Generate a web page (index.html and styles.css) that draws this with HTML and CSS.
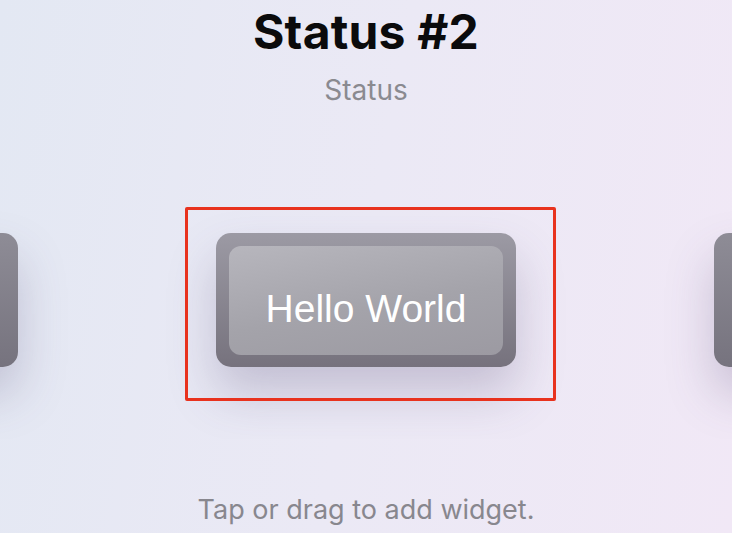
FILE: index.html
```html
<!DOCTYPE html>
<html lang="en">
<head>
<meta charset="utf-8">
<title>Status #2</title>
<link rel="stylesheet" href="styles.css">
</head>
<body>
<main class="screen">
  <header class="header">
    <h1 class="title">Status #2</h1>
    <p class="subtitle">Status</p>
  </header>
  <section class="carousel">
    <div class="widget side"></div>
    <div class="widget-slot">
      <div class="widget main">
        <div class="widget-inner">Hello World</div>
      </div>
      <div class="highlight"></div>
    </div>
    <div class="widget side"></div>
  </section>
  <p class="hint">Tap or drag to add widget.</p>
</main>
</body>
</html>
```
FILE: styles.css
```css
html, body {
  margin: 0;
  padding: 0;
}
body {
  width: 732px;
  height: 533px;
  overflow: hidden;
  background: linear-gradient(100deg, #e3e8f3 0%, #ebe9f5 50%, #f1e8f6 100%);
  font-family: Inter, "Liberation Sans", sans-serif;
}
.screen {
  display: flex;
  flex-direction: column;
  align-items: center;
  height: 533px;
}
.header {
  padding-top: 4px;
  display: flex;
  flex-direction: column;
  align-items: center;
}
.title {
  margin: 0;
  font-size: 48px;
  line-height: 56px;
  font-weight: 700;
  color: #0b0b0c;
  letter-spacing: 0.2px;
}
.subtitle {
  margin: 14px 0 0;
  font-size: 28px;
  line-height: 32px;
  color: #8a8a90;
}
.carousel {
  margin-top: 95px;
  padding: 32px 0 72px;
  display: flex;
  justify-content: center;
  gap: 198px;
  width: 732px;
  overflow: hidden;
}
.widget {
  flex: none;
  width: 300px;
  height: 134px;
  box-sizing: border-box;
  border-radius: 15px;
  box-shadow: 0 26px 48px rgba(85, 75, 115, 0.26);
}
.side {
  background: linear-gradient(180deg, #8e8c96 0%, #76737e 100%);
}
.widget-slot {
  position: relative;
  flex: none;
}
.main {
  padding: 13px 13px 12px;
  background: linear-gradient(180deg, #9c9aa4 0%, #76727d 100%);
}
.widget-inner {
  height: 109px;
  box-sizing: border-box;
  padding-top: 40px;
  border-radius: 12px;
  background: linear-gradient(170deg, #b7b6bd 0%, #a4a3aa 55%, #9c9aa2 100%);
  color: #ffffff;
  font-family: "Liberation Sans", Arial, sans-serif;
  font-size: 39px;
  line-height: 45px;
  text-align: center;
}
.highlight {
  position: absolute;
  left: -31px;
  top: -26px;
  width: 365px;
  height: 188px;
  border: 3px solid #e8321e;
  border-radius: 2px;
}
.hint {
  margin: 55px 0 0;
  font-size: 27px;
  line-height: 32px;
  color: #88878e;
}
```
